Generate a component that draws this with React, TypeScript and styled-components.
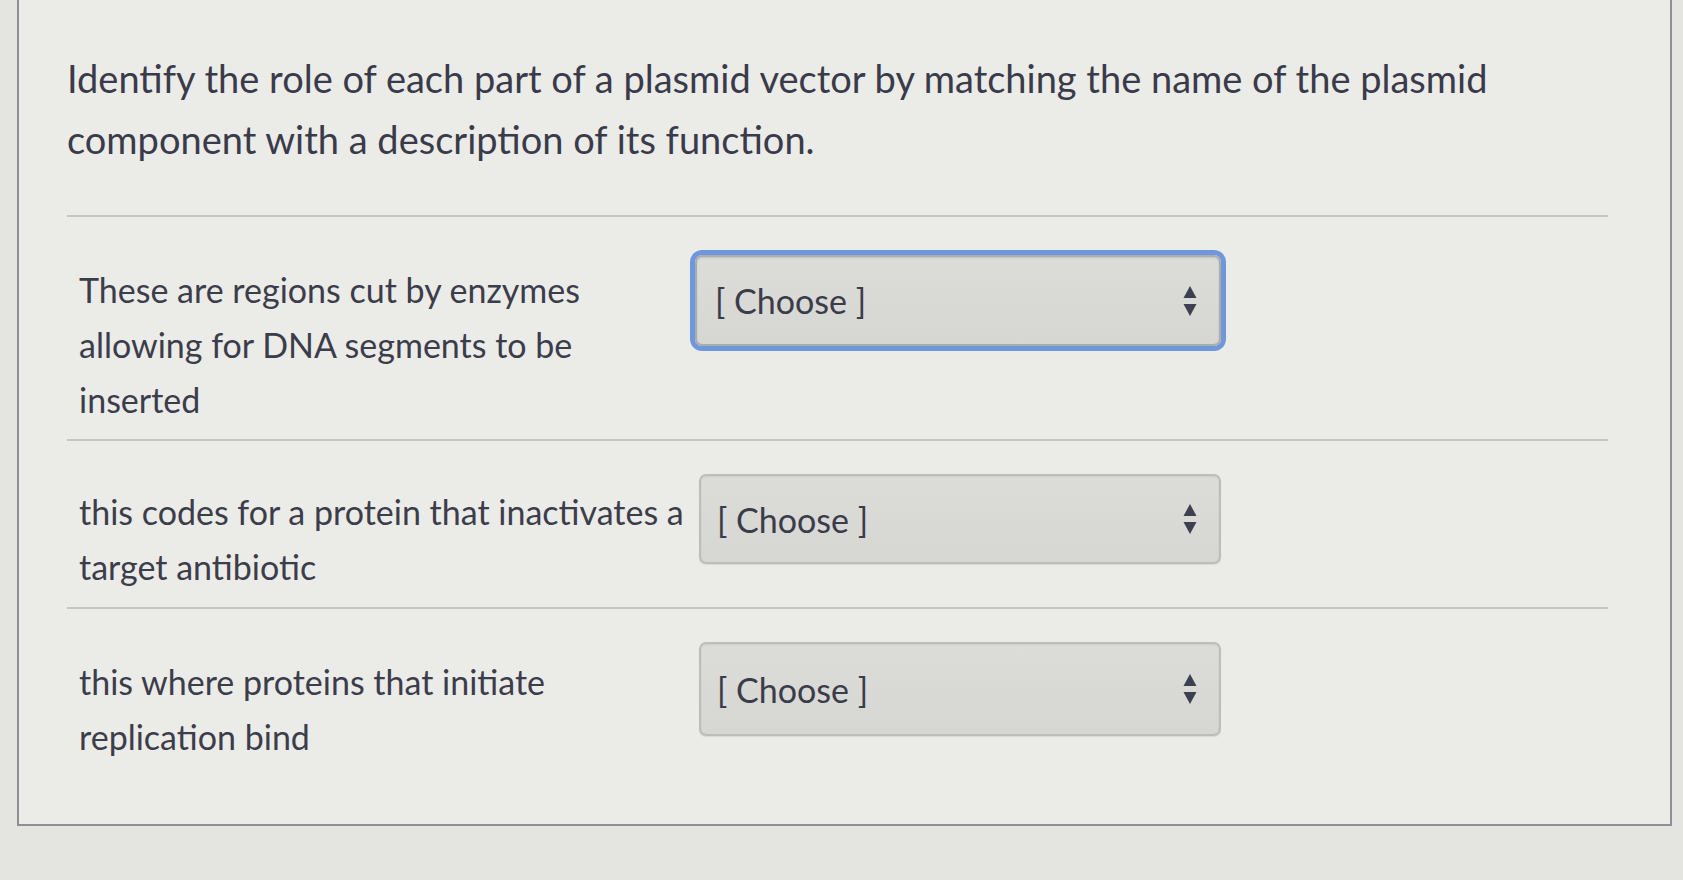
import React from "react";
import styled, { createGlobalStyle } from "styled-components";

const Global = createGlobalStyle`
  html, body { margin: 0; padding: 0; }
  body {
    background: #e4e4e0;
    font-family: Lato, "Open Sans", sans-serif;
    color: #3c3d4b;
    overflow: hidden;
  }
`;

const Page = styled.div`
  width: 1683px;
  height: 880px;
  padding: 0 11px 0 17px;
  box-sizing: border-box;
`;

const Card = styled.div`
  background: #ebebe8;
  border: 2px solid #8e8e94;
  border-top: none;
  height: 826px;
  box-sizing: border-box;
  padding: 48px 62px 0 48px;
`;

const Title = styled.h1`
  margin: 0;
  font-size: 38px;
  font-weight: 400;
  line-height: 61px;
  color: #3a3b4a;
  padding-right: 60px;
`;

const Divider = styled.hr`
  margin: 0;
  border: none;
  border-top: 2px solid #c6c6c3;
`;

const Rule = styled(Divider)`
  margin-top: 45px;
`;

const Row = styled.div`
  display: grid;
  grid-template-columns: 620px 522px;
  padding: ${(p: { $top: number; $bottom: number }) => `${p.$top}px 0 ${p.$bottom}px 12px`};
  align-items: start;
`;

const Label = styled.div`
  font-size: 34px;
  line-height: 55px;
  color: #3c3d4b;
  padding-top: ${(p: { $pt: number }) => p.$pt}px;
`;

const Select = styled.div<{ $focused?: boolean; $h: number }>`
  height: ${(p) => p.$h}px;
  box-sizing: border-box;
  border-radius: 7px;
  border: 2px solid ${(p) => (p.$focused ? "#a9acb0" : "#bdbdbb")};
  background: linear-gradient(#dcdcd9, #d6d6d3);
  box-shadow: ${(p) =>
    p.$focused
      ? "0 0 0 5px #6f97dc, inset 0 1px 2px rgba(0,0,0,0.12)"
      : "inset 0 1px 2px rgba(0,0,0,0.08), 0 1px 1px rgba(0,0,0,0.08)"};
  display: flex;
  align-items: center;
  justify-content: space-between;
  padding: 0 22px 0 ${(p) => (p.$focused ? "18px" : "16px")};
  margin-left: ${(p) => (p.$focused ? "-4px" : "0")};
  margin-top: ${(p) => (p.$focused ? "10px" : "0")};
  font-size: 34px;
  color: #3b3c4a;
  cursor: pointer;
`;

const Arrows = () => (
  <svg width="14" height="32" viewBox="0 0 14 32" aria-hidden>
    <path d="M7 1 L13.5 13 H0.5 Z" fill="#3d4050" />
    <path d="M7 31 L13.5 19 H0.5 Z" fill="#3d4050" />
  </svg>
);

const items = [
  {
    text: (
      <>
        These are regions cut by enzymes
        <br />
        allowing for DNA segments to be
        <br />
        inserted
      </>
    ),
    focused: true,
    top: 28,
    bottom: 12,
    pt: 17,
    h: 91,
  },
  {
    text: (
      <>
        this codes for a protein that inactivates a
        <br />
        target antibiotic
      </>
    ),
    focused: false,
    top: 33,
    bottom: 13,
    pt: 10,
    h: 90,
  },
  {
    text: (
      <>
        this where proteins that initiate
        <br />
        replication bind
      </>
    ),
    focused: false,
    top: 33,
    bottom: 15,
    pt: 12,
    h: 94,
  },
];

export default function App() {
  return (
    <Page>
      <Global />
      <Card>
        <Title>
          Identify the role of each part of a plasmid vector by matching the name of the plasmid
          component with a description of its function.
        </Title>
        <Rule />
        {items.map((it, i) => (
          <React.Fragment key={i}>
            <Row $top={it.top} $bottom={it.bottom}>
              <Label $pt={it.pt}>{it.text}</Label>
              <Select $focused={it.focused} $h={it.h} role="button" tabIndex={0}>
                <span>[ Choose ]</span>
                <Arrows />
              </Select>
            </Row>
            {i < items.length - 1 && <Divider />}
          </React.Fragment>
        ))}
      </Card>
    </Page>
  );
}
